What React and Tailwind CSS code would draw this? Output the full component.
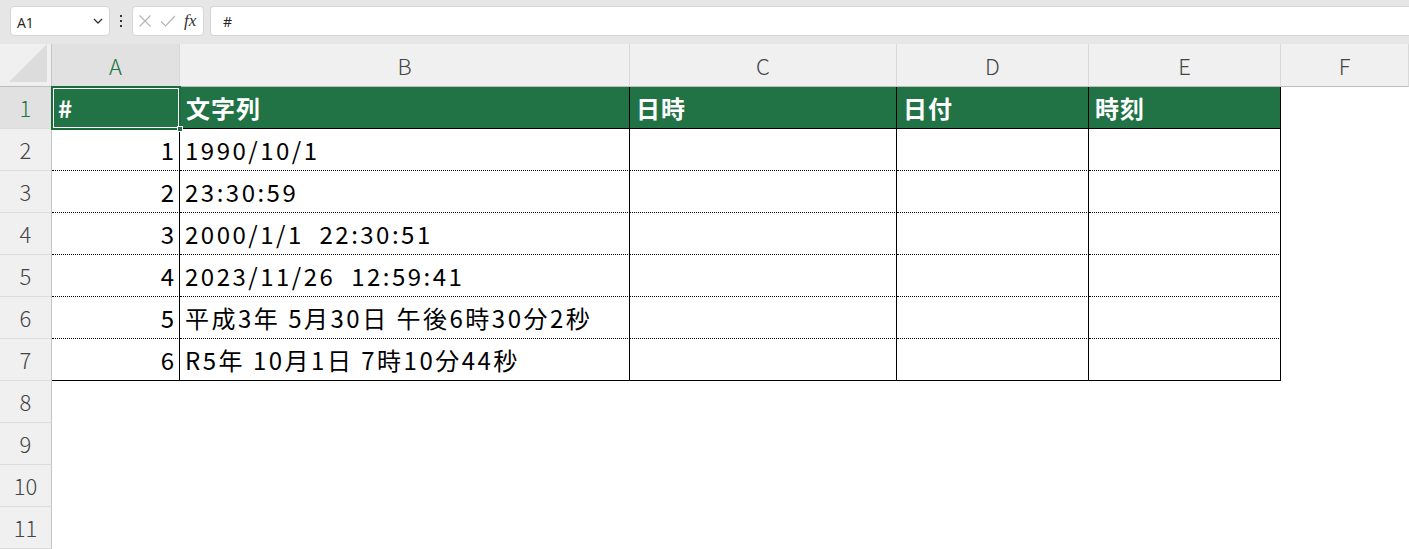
import React from "react";

const cols = ["A", "B", "C", "D", "E", "F"];
const header = ["#", "文字列", "日時", "日付", "時刻"];
const data = [
  [1, "1990/10/1"],
  [2, "23:30:59"],
  [3, "2000/1/1\u00a0\u00a022:30:51"],
  [4, "2023/11/26\u00a0\u00a012:59:41"],
  [5, "平成3年 5月30日 午後6時30分2秒"],
  [6, "R5年 10月1日 7時10分44秒"],
];

const cellFont = { fontFamily: '"Noto Sans CJK JP", "Noto Sans", sans-serif' };

function RowHeader({ n, selected }) {
  return (
    <div
      className={`h-[42px] flex items-center justify-center border-r border-r-[#c4c4c4] border-b border-b-[#dcdcdc] text-[22px] font-light ${
        selected ? "bg-[#e1e1e1] text-[#217346]" : "bg-[#f0f0f0] text-[#444444]"
      }`}
      style={cellFont}
    >
      {n}
    </div>
  );
}

export default function App() {
  return (
    <div className="w-[1409px] h-[549px] overflow-hidden bg-white select-none">
      {/* Toolbar */}
      <div className="h-[44px] bg-[#e6e6e6] flex items-start pt-[6px] pl-[10px]">
        <div className="w-[100px] h-[30px] bg-white rounded-[4px] border border-[#d6d6d6] flex items-center justify-between pl-[6px] pr-[4px]">
          <span className="text-[14px] text-[#222] pt-[2px]" style={{ fontFamily: '"Open Sans", sans-serif' }}>A1</span>
          <svg width="14" height="14" viewBox="0 0 14 14" fill="none" stroke="#333" strokeWidth="1.3">
            <path d="M3 5 L7 9 L11 5" />
          </svg>
        </div>
        <div className="w-[22px] h-[30px] flex items-center justify-center">
          <svg width="4" height="14" viewBox="0 0 4 14" fill="#333">
            <rect x="1" y="1" width="2" height="2" />
            <rect x="1" y="6" width="2" height="2" />
            <rect x="1" y="11" width="2" height="2" />
          </svg>
        </div>
        <div className="w-[72px] h-[30px] bg-white rounded-[4px] border border-[#d6d6d6] flex items-center pl-[5px] gap-[8px]">
          <svg width="14" height="14" viewBox="0 0 14 14" stroke="#b4b4b4" strokeWidth="1.1" fill="none">
            <path d="M1.5 1.5 L12.5 12.5 M12.5 1.5 L1.5 12.5" />
          </svg>
          <svg width="16" height="14" viewBox="0 0 16 14" stroke="#b4b4b4" strokeWidth="1.1" fill="none">
            <path d="M1 7.5 L5.5 12 L15 2" />
          </svg>
          <span className="text-[17px] italic text-[#333] leading-none pb-[2px]" style={{ fontFamily: '"Liberation Serif", serif' }}>fx</span>
        </div>
        <div className="ml-[6px] flex-1 h-[30px] bg-white rounded-l-[4px] border border-r-0 border-[#d6d6d6] flex items-center pl-[12px]">
          <span className="text-[14px] text-[#222]" style={{ fontFamily: '"Open Sans", sans-serif' }}>#</span>
        </div>
      </div>

      {/* Grid */}
      <div className="grid grid-cols-[52px_128px_450px_267px_192px_192px_128px]">
        {/* Column headers */}
        <div className="h-[43px] bg-[#f0f0f0] border-r border-r-[#c4c4c4] border-b border-b-[#bdbdbd] relative overflow-hidden">
          <div
            className="absolute right-[4px] bottom-[4px] w-[38px] h-[38px] bg-[#dcdcdc]"
            style={{ clipPath: "polygon(100% 0, 100% 100%, 0 100%)" }}
          />
        </div>
        {cols.map((c, i) => (
          <div
            key={c}
            className={`h-[43px] flex items-center justify-center border-r border-r-[#d9d9d9] border-b border-b-[#bdbdbd] text-[22px] font-light ${
              i === 0 ? "bg-[#e1e1e1] text-[#217346]" : "bg-[#f0f0f0] text-[#444444]"
            }`}
            style={cellFont}
          >
            {c}
          </div>
        ))}

        {/* Row 1 */}
        <RowHeader n={1} selected />
        {header.map((h, i) => (
          <div
            key={h}
            className="h-[42px] bg-[#217346] border-r border-r-black border-b border-b-black text-white font-bold text-[24px] tracking-[1px] flex items-center pl-[6px] relative"
            style={cellFont}
          >
            {i === 0 && (
              <div className="absolute -left-[1px] -top-[1px] w-[130px] h-[44px] border-2 border-[#1b6a3d] z-10">
                <div className="w-full h-full border border-white" />
                <div className="absolute -right-[4px] -bottom-[4px] w-[6px] h-[6px] bg-[#217346] border border-white" />
              </div>
            )}
            <span className="relative">{h}</span>
          </div>
        ))}
        <div className="h-[42px] bg-white" />

        {data.map((row, r) => {
          const last = r === data.length - 1;
          const cell = last
            ? "h-[42px] border-b border-black shadow-[inset_-1px_0_0_#000]"
            : "h-[42px] border-b border-dotted border-black shadow-[inset_-1px_0_0_#000]";
          return (
            <React.Fragment key={r}>
              <RowHeader n={r + 2} />
              <div
                className={`${cell} flex items-center justify-end pr-[6px] text-[24px] text-black`}
                style={cellFont}
              >
                {row[0]}
              </div>
              <div
                className={`${cell} flex items-center pl-[5px] text-[24px] tracking-[2.5px] text-black whitespace-nowrap`}
                style={cellFont}
              >
                {row[1]}
              </div>
              <div className={cell} />
              <div className={cell} />
              <div className={cell} />
              <div className="h-[42px]" />
            </React.Fragment>
          );
        })}

        {[8, 9, 10, 11].map((n) => (
          <React.Fragment key={n}>
            <RowHeader n={n} />
            <div className="col-span-6 h-[42px] bg-white" />
          </React.Fragment>
        ))}
      </div>
    </div>
  );
}
